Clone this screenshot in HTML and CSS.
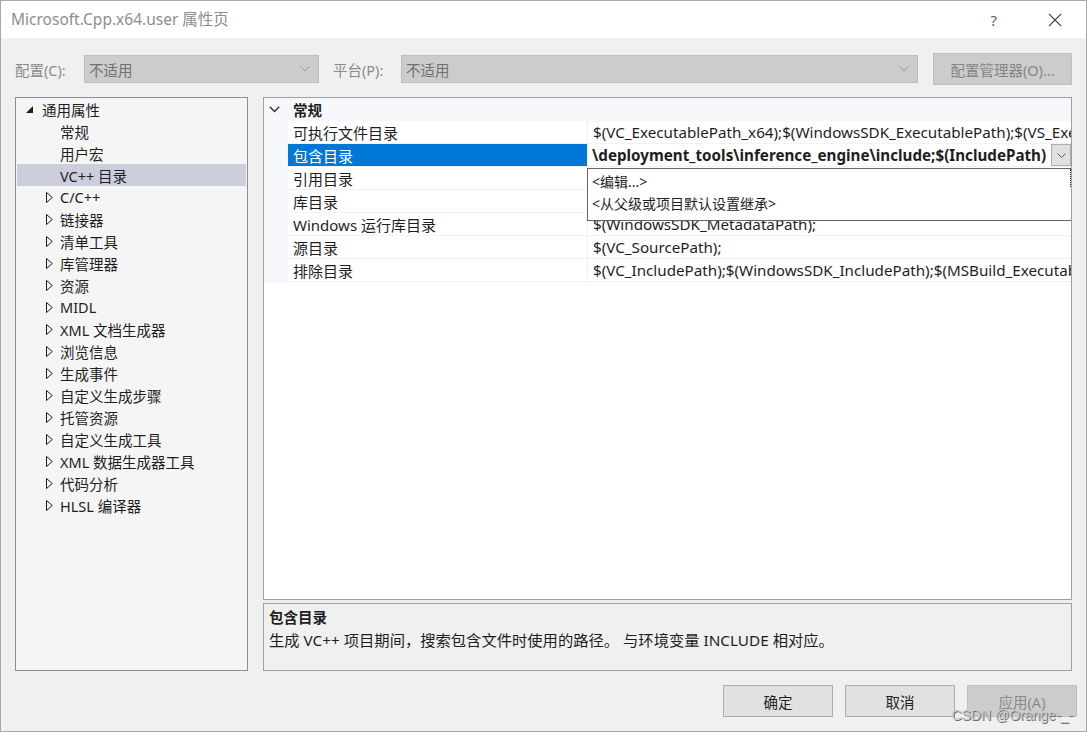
FILE: index.html
```html
<!DOCTYPE html>
<html lang="zh-CN">
<head>
<meta charset="utf-8">
<title>Microsoft.Cpp.x64.user 属性页</title>
<link rel="stylesheet" href="styles.css">
</head>
<body>
<div class="window">
  <div class="titlebar">
    <div class="title">Microsoft.Cpp.x64.user 属性页</div>
    <div class="tb-btns">
      <span class="help">?</span>
      <svg class="close" width="14" height="14" viewBox="0 0 14 14"><path d="M1 1L13 13M13 1L1 13" stroke="#444" stroke-width="1.1" fill="none"/></svg>
    </div>
  </div>
  <div class="config-row">
    <span class="lbl">配置(C):</span>
    <div class="combo c1"><span>不适用</span><svg class="chev" width="10" height="6" viewBox="0 0 10 6"><path d="M0.5 0.5L5 5L9.5 0.5" stroke="#9a9a9a" fill="none"/></svg></div>
    <span class="lbl l2">平台(P):</span>
    <div class="combo c2"><span>不适用</span><svg class="chev" width="10" height="6" viewBox="0 0 10 6"><path d="M0.5 0.5L5 5L9.5 0.5" stroke="#9a9a9a" fill="none"/></svg></div>
    <div class="btn-dis mgr">配置管理器(O)...</div>
  </div>
  <div class="main">
    <div class="tree">
      <div class="ti root"><svg class="tri" width="7" height="7" viewBox="0 0 7 7"><path d="M7 0V7H0Z" fill="#1e1e1e"/></svg><span>通用属性</span></div>
      <div class="ti leaf">常规</div>
      <div class="ti leaf">用户宏</div>
      <div class="ti leaf sel">VC++ 目录</div>
      <div class="ti node"><svg class="otri" width="7" height="11" viewBox="0 0 7 11"><path d="M0.5 0.5V10.5L6.3 5.5Z" stroke="#1e1e1e" fill="none"/></svg><span>C/C++</span></div>
      <div class="ti node"><svg class="otri" width="7" height="11" viewBox="0 0 7 11"><path d="M0.5 0.5V10.5L6.3 5.5Z" stroke="#1e1e1e" fill="none"/></svg><span>链接器</span></div>
      <div class="ti node"><svg class="otri" width="7" height="11" viewBox="0 0 7 11"><path d="M0.5 0.5V10.5L6.3 5.5Z" stroke="#1e1e1e" fill="none"/></svg><span>清单工具</span></div>
      <div class="ti node"><svg class="otri" width="7" height="11" viewBox="0 0 7 11"><path d="M0.5 0.5V10.5L6.3 5.5Z" stroke="#1e1e1e" fill="none"/></svg><span>库管理器</span></div>
      <div class="ti node"><svg class="otri" width="7" height="11" viewBox="0 0 7 11"><path d="M0.5 0.5V10.5L6.3 5.5Z" stroke="#1e1e1e" fill="none"/></svg><span>资源</span></div>
      <div class="ti node"><svg class="otri" width="7" height="11" viewBox="0 0 7 11"><path d="M0.5 0.5V10.5L6.3 5.5Z" stroke="#1e1e1e" fill="none"/></svg><span>MIDL</span></div>
      <div class="ti node"><svg class="otri" width="7" height="11" viewBox="0 0 7 11"><path d="M0.5 0.5V10.5L6.3 5.5Z" stroke="#1e1e1e" fill="none"/></svg><span>XML 文档生成器</span></div>
      <div class="ti node"><svg class="otri" width="7" height="11" viewBox="0 0 7 11"><path d="M0.5 0.5V10.5L6.3 5.5Z" stroke="#1e1e1e" fill="none"/></svg><span>浏览信息</span></div>
      <div class="ti node"><svg class="otri" width="7" height="11" viewBox="0 0 7 11"><path d="M0.5 0.5V10.5L6.3 5.5Z" stroke="#1e1e1e" fill="none"/></svg><span>生成事件</span></div>
      <div class="ti node"><svg class="otri" width="7" height="11" viewBox="0 0 7 11"><path d="M0.5 0.5V10.5L6.3 5.5Z" stroke="#1e1e1e" fill="none"/></svg><span>自定义生成步骤</span></div>
      <div class="ti node"><svg class="otri" width="7" height="11" viewBox="0 0 7 11"><path d="M0.5 0.5V10.5L6.3 5.5Z" stroke="#1e1e1e" fill="none"/></svg><span>托管资源</span></div>
      <div class="ti node"><svg class="otri" width="7" height="11" viewBox="0 0 7 11"><path d="M0.5 0.5V10.5L6.3 5.5Z" stroke="#1e1e1e" fill="none"/></svg><span>自定义生成工具</span></div>
      <div class="ti node"><svg class="otri" width="7" height="11" viewBox="0 0 7 11"><path d="M0.5 0.5V10.5L6.3 5.5Z" stroke="#1e1e1e" fill="none"/></svg><span>XML 数据生成器工具</span></div>
      <div class="ti node"><svg class="otri" width="7" height="11" viewBox="0 0 7 11"><path d="M0.5 0.5V10.5L6.3 5.5Z" stroke="#1e1e1e" fill="none"/></svg><span>代码分析</span></div>
      <div class="ti node"><svg class="otri" width="7" height="11" viewBox="0 0 7 11"><path d="M0.5 0.5V10.5L6.3 5.5Z" stroke="#1e1e1e" fill="none"/></svg><span>HLSL 编译器</span></div>
    </div>
    <div class="right">
      <div class="grid">
        <div class="cat">
          <svg class="cchev" width="11" height="7" viewBox="0 0 11 7"><path d="M0.8 0.8L5.5 5.5L10.2 0.8" stroke="#333" stroke-width="1.4" fill="none"/></svg>
          <span>常规</span>
        </div>
        <div class="row"><div class="gut"></div><div class="name">可执行文件目录</div><div class="val">$(VC_ExecutablePath_x64);$(WindowsSDK_ExecutablePath);$(VS_ExecutablePath);$(MSBuild_ExecutablePath)</div></div>
        <div class="row active"><div class="gut"></div><div class="name">包含目录</div><div class="val"><span class="vtext">\deployment_tools\inference_engine\include;$(IncludePath)</span><div class="ddbtn"><svg width="9" height="5" viewBox="0 0 9 5"><path d="M0.5 0.5L4.5 4.5L8.5 0.5" stroke="#555" fill="none"/></svg></div></div></div>
        <div class="row"><div class="gut"></div><div class="name">引用目录</div><div class="val">$(VC_ReferencesPath_x64);</div></div>
        <div class="row"><div class="gut"></div><div class="name">库目录</div><div class="val">$(VC_LibraryPath_x64);$(WindowsSDK_LibraryPath_x64)</div></div>
        <div class="row"><div class="gut"></div><div class="name">Windows 运行库目录</div><div class="val">$(WindowsSDK_MetadataPath);</div></div>
        <div class="row"><div class="gut"></div><div class="name">源目录</div><div class="val">$(VC_SourcePath);</div></div>
        <div class="row"><div class="gut"></div><div class="name">排除目录</div><div class="val">$(VC_IncludePath);$(WindowsSDK_IncludePath);$(MSBuild_ExecutablePath);$(VC_LibraryPath_x64);</div></div>
        <div class="popup">
          <div class="pi">&lt;编辑...&gt;</div>
          <div class="pi">&lt;从父级或项目默认设置继承&gt;</div>
          <div class="focus"></div>
        </div>
      </div>
      <div class="desc">
        <div class="dtitle">包含目录</div>
        <div class="dtext">生成 VC++ 项目期间，搜索包含文件时使用的路径。 与环境变量 INCLUDE 相对应。</div>
      </div>
    </div>
  </div>
  <div class="buttons">
    <div class="btn">确定</div>
    <div class="btn">取消</div>
    <div class="btn btn-dis apply">应用(A)</div>
  </div>
  <div class="watermark">CSDN @Orange-_-</div>
</div>
</body>
</html>
```
FILE: styles.css
```css
* { box-sizing: border-box; }
html, body { margin: 0; padding: 0; }
body {
  width: 1087px;
  height: 732px;
  overflow: hidden;
  background: #f0f0f0;
  font-family: "Noto Sans", "Noto Sans CJK SC", sans-serif;
  font-size: 15px;
  color: #1e1e1e;
}
.window {
  position: relative;
  width: 1087px;
  height: 732px;
  border: 1px solid #a8a8a8;
  background: #f0f0f0;
  display: flex;
  flex-direction: column;
}
.titlebar {
  height: 37px;
  background: #fff;
  display: flex;
  align-items: center;
  justify-content: space-between;
  padding-left: 10px;
  flex: none;
}
.title {
  font-size: 15.5px;
  color: #8e8e8e;
  margin-top: -2px;
}
.tb-btns {
  display: flex;
  align-items: center;
}
.help {
  font-size: 15px;
  color: #666;
  margin-right: 51px;
}
.close { margin-right: 24px; }

.config-row {
  display: flex;
  align-items: center;
  height: 32px;
  margin-top: 15px;
  padding-left: 14px;
  flex: none;
}
.lbl {
  color: #8a8a8a;
  font-size: 14.5px;
  width: 69px;
}
.l2 { width: 68px; margin-left: 14px; }
.combo {
  height: 28px;
  background: #cccccc;
  border: 1px solid #bdbdbd;
  display: flex;
  align-items: center;
  justify-content: space-between;
  padding: 0 8px 0 4px;
  color: #707070;
  font-size: 14.5px;
}
.c1 { width: 235px; }
.c2 { width: 517px; }
.btn-dis {
  background: #cccccc;
  border: 1px solid #bfbfbf;
  color: #858585;
}
.mgr {
  margin-left: 15px;
  width: 139px;
  height: 32px;
  display: flex;
  align-items: center;
  justify-content: center;
  font-size: 14.5px;
}

.main {
  display: flex;
  margin-top: 12px;
  padding-left: 14px;
  gap: 15px;
  height: 574px;
  flex: none;
}
.tree {
  width: 233px;
  height: 574px;
  border: 1px solid #8e8f96;
  background: #f5f5f5;
  padding: 0 1px;
}
.ti {
  height: 22px;
  display: flex;
  align-items: center;
  font-size: 14.5px;
  white-space: nowrap;
}
.root { padding-left: 9px; }
.root .tri { margin-right: 9px; margin-top: 1px; }
.leaf { padding-left: 43px; }
.node { padding-left: 29px; }
.node .otri { margin-right: 7px; }
.sel { background: #cccedb; }

.right {
  width: 809px;
  display: flex;
  flex-direction: column;
  gap: 3px;
}
.grid {
  position: relative;
  height: 503px;
  border: 1px solid #a0a0a0;
  background: #fff;
  overflow: hidden;
}
.cat {
  height: 23px;
  background: #f5f7fb;
  display: flex;
  align-items: center;
  font-weight: bold;
  font-size: 14.5px;
}
.cchev { margin-left: 5px; margin-right: 13px; }
.row {
  height: 23px;
  display: flex;
  border-bottom: 1px solid #f0f2f6;
  font-size: 15px;
}
.gut {
  width: 24px;
  background: #f5f7fb;
  flex: none;
}
.name {
  width: 300px;
  flex: none;
  padding-left: 5px;
  display: flex;
  align-items: center;
  border-right: 1px solid #f0f2f6;
  white-space: nowrap;
}
.val {
  flex: 1;
  padding-left: 5px;
  display: flex;
  align-items: center;
  white-space: nowrap;
  overflow: hidden;
  position: relative;
  font-size: 15.2px;
}
.active .name {
  background: #0078d7;
  color: #fff;
}
.active .val {
  font-weight: bold;
  padding-left: 4px;
  justify-content: space-between;
  padding-right: 0;
}
.vtext { overflow: hidden; }
.ddbtn {
  width: 20px;
  height: 22px;
  flex: none;
  background: #e1e1e1;
  border: 1px solid #adadad;
  display: flex;
  align-items: center;
  justify-content: center;
}
.popup {
  position: absolute;
  left: 323px;
  top: 70px;
  width: 485px;
  height: 53px;
  background: #fff;
  border: 1px solid #646464;
  padding-top: 1px;
}
.pi {
  height: 22px;
  padding-left: 4px;
  display: flex;
  align-items: center;
  font-size: 14px;
}
.focus {
  position: absolute;
  right: 0;
  top: 0;
  width: 1px;
  height: 18px;
  border-right: 1px dotted #222;
}
.desc {
  height: 68px;
  border: 1px solid #a0a0a0;
  background: #f0f0f0;
  padding: 1px 5px;
}
.dtitle {
  font-weight: bold;
  font-size: 14.5px;
  height: 22px;
  display: flex;
  align-items: center;
}
.dtext {
  font-size: 15.3px;
  height: 24px;
  display: flex;
  align-items: center;
  white-space: nowrap;
}

.buttons {
  display: flex;
  justify-content: flex-end;
  gap: 12px;
  padding-right: 9px;
  margin-top: 14px;
}
.btn {
  width: 110px;
  height: 32px;
  border: 1px solid #adadad;
  background: #e1e1e1;
  display: flex;
  align-items: center;
  justify-content: center;
  font-size: 14.5px;
}
.btn.apply {
  background: #cccccc;
  border-color: #bfbfbf;
  color: #8a8a8a;
}
.watermark {
  position: absolute;
  right: 13px;
  bottom: 8px;
  font-family: "Liberation Sans", sans-serif;
  font-size: 14px;
  color: #c8c8c8;
  text-shadow: 1px 1px 0 #6f6f6f;
}
```
